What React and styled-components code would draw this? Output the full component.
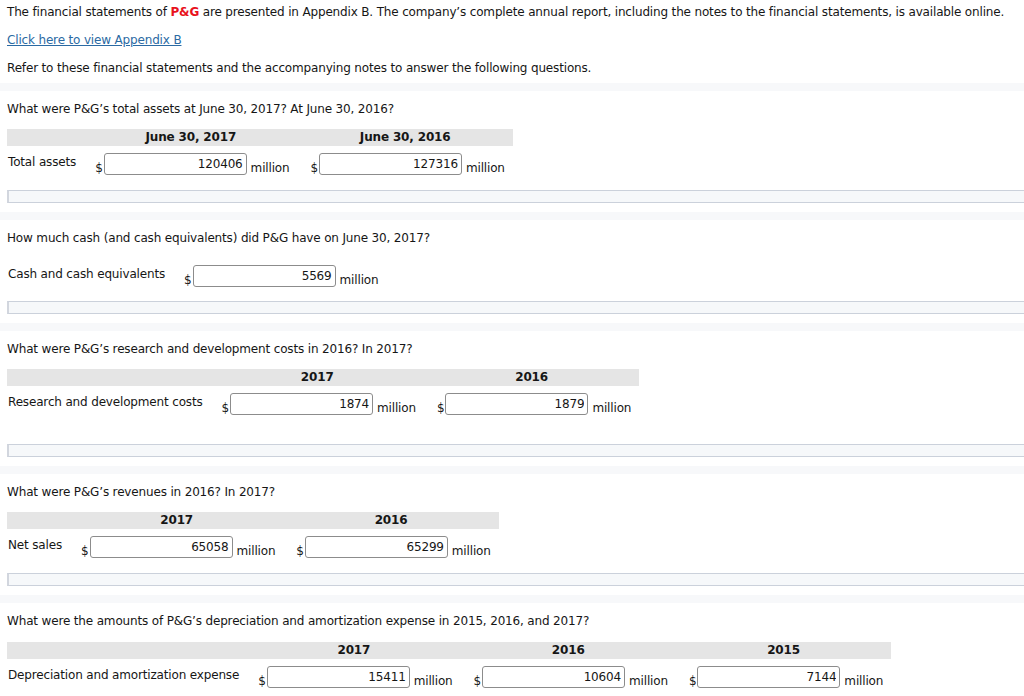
import React from "react";
import styled, { createGlobalStyle } from "styled-components";

const GlobalStyle = createGlobalStyle`
  html, body {
    margin: 0;
    padding: 0;
    background: #ffffff;
    overflow: hidden;
  }
  body {
    font-family: "DejaVu Sans", Verdana, sans-serif;
    font-size: 12px;
    letter-spacing: -0.16px;
    color: #161616;
  }
`;

const Page = styled.div`
  padding-top: 4px;
`;

const Intro = styled.div`
  padding: 0 7px 7px 7px;
`;

const Line = styled.p`
  margin: 0 0 ${(p) => (p.$last ? 0 : 12)}px 0;
  line-height: 16px;
  white-space: nowrap;
`;

const Brand = styled.span`
  color: #e8121d;
  font-weight: bold;
`;

const Link = styled.a`
  color: #2b6aa3;
  text-decoration: underline;
  cursor: pointer;
`;

const Band = styled.div`
  height: 8px;
  background: #f7f8fa;
`;

const Section = styled.section`
  padding: 10px 0 9px 7px;
`;

const Question = styled.p`
  margin: 0;
  line-height: 16px;
  white-space: nowrap;
`;

const AnswerTable = styled.table`
  border-collapse: collapse;
  margin-top: ${(p) => p.$gap}px;
`;

const HeadCell = styled.th`
  background: #e5e5e5;
  height: 17px;
  padding: 0;
  font-weight: bold;
  font-size: 12px;
  line-height: 17px;
  text-align: center;
  color: #161616;
`;

const LabelCell = styled.td`
  vertical-align: top;
  padding: 7px 8px 0 1px;
  line-height: 18px;
  white-space: nowrap;
`;

const DollarCell = styled.td`
  vertical-align: bottom;
  padding: 0 1px 0 ${(p) => (p.$first ? 11 : 13)}px;
  line-height: 16px;
`;

const InputCell = styled.td`
  padding: 7px 0 0 0;
  vertical-align: top;
`;

const UnitCell = styled.td`
  vertical-align: bottom;
  padding: 0 8px 0 4px;
  line-height: 16px;
  white-space: nowrap;
`;

const Amount = styled.input`
  display: block;
  box-sizing: border-box;
  width: 143px;
  height: 22px;
  margin: 0 0 1px 0;
  padding: 0 3px;
  border: 1px solid #8c8c8c;
  border-radius: 3px;
  background: #ffffff;
  text-align: right;
  font-family: "DejaVu Sans", Verdana, sans-serif;
  font-size: 12px;
  letter-spacing: -0.16px;
  color: #161616;
  outline: none;
`;

const Feedback = styled.div`
  margin-top: ${(p) => p.$gap}px;
  height: 11px;
  background: #f6f8fa;
  border-top: 1px solid #cbd1db;
  border-bottom: 1px solid #cbd1db;
  border-left: 2px solid #d2d6de;
`;

const sections = [
  {
    question: "What were P&G\u2019s total assets at June 30, 2017? At June 30, 2016?",
    headers: ["June 30, 2017", "June 30, 2016"],
    label: "Total assets",
    values: ["120406", "127316"],
    top: 12,
    gap: 14,
  },
  {
    question: "How much cash (and cash equivalents) did P&G have on June 30, 2017?",
    headers: null,
    label: "Cash and cash equivalents",
    values: ["5569"],
    top: 12,
    gap: 13,
  },
  {
    question: "What were P&G\u2019s research and development costs in 2016? In 2017?",
    headers: ["2017", "2016"],
    label: "Research and development costs",
    values: ["1874", "1879"],
    top: 12,
    gap: 28,
  },
  {
    question: "What were P&G\u2019s revenues in 2016? In 2017?",
    headers: ["2017", "2016"],
    label: "Net sales",
    values: ["65058", "65299"],
    top: 12,
    gap: 14,
  },
  {
    question:
      "What were the amounts of P&G\u2019s depreciation and amortization expense in 2015, 2016, and 2017?",
    headers: ["2017", "2016", "2015"],
    label: "Depreciation and amortization expense",
    values: ["15411", "10604", "7144"],
    top: 13,
    gap: 14,
  },
];

function AnswerBlock({ question, headers, label, values, top, gap }) {
  return (
    <Section>
      <Question>{question}</Question>
      <AnswerTable $gap={top}>
        {headers && (
          <thead>
            <tr>
              <HeadCell />
              {headers.map((h) => (
                <HeadCell key={h} colSpan={3}>
                  {h}
                </HeadCell>
              ))}
            </tr>
          </thead>
        )}
        <tbody>
          <tr>
            <LabelCell>{label}</LabelCell>
            {values.map((v, i) => (
              <React.Fragment key={i}>
                <DollarCell $first={i === 0}>$</DollarCell>
                <InputCell>
                  <Amount type="text" defaultValue={v} />
                </InputCell>
                <UnitCell>million</UnitCell>
              </React.Fragment>
            ))}
          </tr>
        </tbody>
      </AnswerTable>
      <Feedback $gap={gap} />
    </Section>
  );
}

export default function App() {
  return (
    <Page>
      <GlobalStyle />
      <Intro>
        <Line>
          The financial statements of <Brand>P&amp;G</Brand> are presented in Appendix B. The
          company&rsquo;s complete annual report, including the notes to the financial statements,
          is available online.
        </Line>
        <Line>
          <Link>Click here to view Appendix B</Link>
        </Line>
        <Line $last>
          Refer to these financial statements and the accompanying notes to answer the following
          questions.
        </Line>
      </Intro>
      <Band />
      {sections.map((s, i) => (
        <React.Fragment key={i}>
          <AnswerBlock {...s} />
          {i < sections.length - 1 && <Band />}
        </React.Fragment>
      ))}
    </Page>
  );
}
